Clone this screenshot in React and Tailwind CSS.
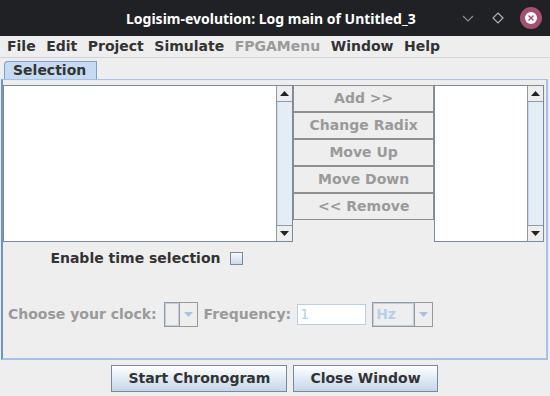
import React from 'react';

const UI = { fontFamily: '"DejaVu Sans", sans-serif' };

const ArrowUp = ({ color = '#222' }) => (
  <svg width="9" height="5" viewBox="0 0 9 5"><path d="M4.5 0 L9 5 L0 5 Z" fill={color} /></svg>
);
const ArrowDown = ({ color = '#222' }) => (
  <svg width="9" height="5" viewBox="0 0 9 5"><path d="M0 0 L9 0 L4.5 5 Z" fill={color} /></svg>
);

const ScrollBar = () => (
  <div className="w-[16px] flex flex-col border-l border-[#8f9bab] bg-[#eeeeee]">
    <div className="h-[16px] flex items-center justify-center border-b border-[#8f9bab] bg-[#eeeeee]">
      <ArrowUp />
    </div>
    <div className="flex-1 bg-[#e4ecf5] border-l border-[#c8d6e8]" />
    <div className="h-[16px] flex items-center justify-center border-t border-[#8f9bab] bg-[#eeeeee]">
      <ArrowDown />
    </div>
  </div>
);

const ListBox = ({ className }) => (
  <div className={`flex border border-[#7b8a9b] bg-white ${className}`}>
    <div className="flex-1" />
    <ScrollBar />
  </div>
);

const SideButton = ({ label }) => (
  <div className="h-[27px] flex items-center justify-center border border-[#8e8e8e] bg-[#eeeeee] text-[#9a9a9a] font-bold text-[14px]">
    {label}
  </div>
);

const Combo = ({ fieldW, text }) => (
  <div className="flex h-[25px] border border-[#999999]">
    <div className={`${fieldW} border border-[#b8cfe6] flex items-center pl-[2px] text-[#b8cfe6] text-[14px] font-bold`}>{text}</div>
    <div className="w-[18px] border-l border-[#999999] flex items-center justify-center">
      <ArrowDown color="#a7c3e2" />
    </div>
  </div>
);

const App = () => {
  const menus = ['File', 'Edit', 'Project', 'Simulate', 'FPGAMenu', 'Window', 'Help'];

  return (
    <div className="w-[550px] h-[396px] bg-[#eeeeee] flex flex-col overflow-hidden" style={UI}>
      {/* title bar */}
      <div className="h-[36px] bg-[#1f2125] flex items-center">
        <div className="flex-1 pl-[126px] text-white font-bold text-[14px]" style={{ fontFamily: '"Noto Sans", sans-serif' }}>
          Logisim-evolution: Log main of Untitled_3
        </div>
        <div className="flex items-center gap-[14px] pr-[8px]">
          <svg width="16" height="16" viewBox="0 0 16 16"><path d="M3 6 L8 11 L13 6" stroke="#8b8d91" strokeWidth="1.2" fill="none" /></svg>
          <svg width="16" height="16" viewBox="0 0 16 16"><path d="M8 3 L13 8 L8 13 L3 8 Z" stroke="#b0b2b5" strokeWidth="1.2" fill="none" /></svg>
          <div className="w-[22px] h-[22px] rounded-full bg-[#a74f6f] flex items-center justify-center">
            <div className="w-[12px] h-[12px] rounded-full bg-white flex items-center justify-center">
              <svg width="8" height="8" viewBox="0 0 8 8"><path d="M1.5 1.5 L6.5 6.5 M6.5 1.5 L1.5 6.5" stroke="#a74f6f" strokeWidth="1.4" /></svg>
            </div>
          </div>
        </div>
      </div>

      {/* menu bar */}
      <div className="h-[22px] flex items-center gap-[10.5px] pl-[7px] border-b border-[#d2d2d2] text-[14px] font-bold text-[#333]">
        {menus.map((m) => (
          <span key={m} className={m === 'FPGAMenu' ? 'text-[#9a9a9a]' : ''}>{m}</span>
        ))}
      </div>

      {/* tab */}
      <div className="pt-[3px] pl-[4px] flex">
        <div className="h-[18px] w-[93px] border border-b-0 border-[#7d9fd3] bg-[#c6dbf2] rounded-tl-[4px] pl-[8px] flex items-center text-[14px] font-bold text-[#333]">
          Selection
        </div>
      </div>

      {/* panel */}
      <div className="mx-[1px] w-[547px] h-[281px] border-2 border-t border-[#a6c0e6] border-l-[#6f92cc] flex flex-col">
        <div className="flex pt-[5px] pr-[2px]">
          <div className="flex flex-col w-[291px]">
            <ListBox className="h-[157px]" />
            <div className="flex items-center justify-center gap-[9px] mt-[6px] pr-[3px] text-[14px] font-bold text-[#333]">
              <span>Enable time selection</span>
              <div className="w-[13px] h-[13px] border border-[#7b8a9b] bg-gradient-to-b from-[#f4f8fc] to-[#cbdaea]" />
            </div>
          </div>
          <div className="w-[142px] flex flex-col">
            {['Add >>', 'Change Radix', 'Move Up', 'Move Down', '<< Remove'].map((b) => (
              <SideButton key={b} label={b} />
            ))}
          </div>
          <ListBox className="w-[110px] h-[157px]" />
        </div>

        <div className="flex items-center mt-[33px] pl-[5px] text-[14px] font-bold text-[#9a9a9a]">
          <span>Choose your clock:</span>
          <div className="ml-[7px]"><Combo fieldW="w-[14px]" text="" /></div>
          <span className="ml-[6px]">Frequency:</span>
          <div className="ml-[6px] w-[69px] h-[21px] border border-[#b8cfe6] bg-white flex items-center pl-[2px] text-[#b8cfe6] font-normal">1</div>
          <div className="ml-[6px]"><Combo fieldW="w-[41px]" text="Hz" /></div>
        </div>
      </div>

      {/* bottom buttons */}
      <div className="flex justify-center gap-[6px] mt-[5px] pr-[1px]">
        {['Start Chronogram', 'Close Window'].map((b) => (
          <div key={b} className="h-[27px] px-[16px] flex items-center border border-[#7a8a9a] bg-gradient-to-b from-white to-[#c5d6ea] text-[14px] font-bold text-[#333]">
            {b}
          </div>
        ))}
      </div>
    </div>
  );
};

export default App;
